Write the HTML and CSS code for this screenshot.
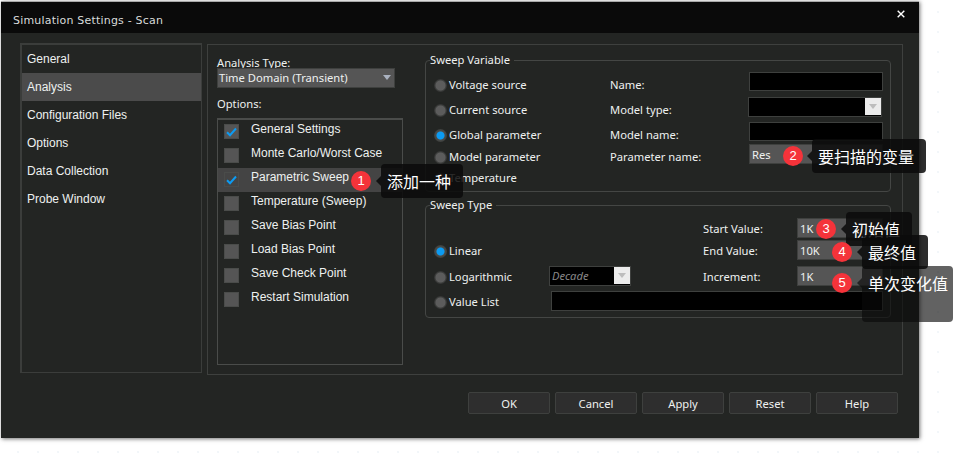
FILE: index.html
```html
<!DOCTYPE html>
<html lang="en">
<head>
<meta charset="utf-8">
<title>Simulation Settings - Scan</title>
<link rel="stylesheet" href="styles.css">
</head>
<body>
<div class="dialog">
  <header class="titlebar">
    <span class="title">Simulation Settings - Scan</span>
    <svg class="close" width="8" height="8" viewBox="0 0 8 8"><path d="M.7.7l6.6 6.6M7.3.7L.7 7.3" stroke="#fff" stroke-width="1.4"/></svg>
  </header>
  <div class="content">
    <nav class="sidebar">
      <div class="nav-item">General</div>
      <div class="nav-item active">Analysis</div>
      <div class="nav-item">Configuration Files</div>
      <div class="nav-item">Options</div>
      <div class="nav-item">Data Collection</div>
      <div class="nav-item">Probe Window</div>
    </nav>
    <main class="panel">
      <section class="options-col">
        <label class="type-label">Analysis Type:</label>
        <div class="type-select">Time Domain (Transient)<i class="caret"></i></div>
        <label class="options-label">Options:</label>
        <div class="checklist">
          <div class="check-row"><span class="box"><svg width="11" height="10" viewBox="0 0 11 10"><path d="M1 5.2l3 3L10 1.5" fill="none" stroke="#0c9bf2" stroke-width="2"/></svg></span>General Settings</div>
          <div class="check-row"><span class="box"></span>Monte Carlo/Worst Case</div>
          <div class="check-row selected"><span class="box"><svg width="11" height="10" viewBox="0 0 11 10"><path d="M1 5.2l3 3L10 1.5" fill="none" stroke="#0c9bf2" stroke-width="2"/></svg></span>Parametric Sweep</div>
          <div class="check-row"><span class="box"></span>Temperature (Sweep)</div>
          <div class="check-row"><span class="box"></span>Save Bias Point</div>
          <div class="check-row"><span class="box"></span>Load Bias Point</div>
          <div class="check-row"><span class="box"></span>Save Check Point</div>
          <div class="check-row"><span class="box"></span>Restart Simulation</div>
        </div>
      </section>
      <section class="sweep-col">
        <fieldset class="group variable">
          <legend>Sweep Variable</legend>
          <div class="var-grid">
            <div class="radio-label"><i class="radio"></i>Voltage source</div>
            <div class="lbl">Name:</div>
            <div class="field"></div>
            <div class="radio-label"><i class="radio"></i>Current source</div>
            <div class="lbl">Model type:</div>
            <div class="combo wide"><span class="combo-btn"><i class="caret grey"></i></span></div>
            <div class="radio-label"><i class="radio on"></i>Global parameter</div>
            <div class="lbl">Model name:</div>
            <div class="field"></div>
            <div class="radio-label"><i class="radio"></i>Model parameter</div>
            <div class="lbl">Parameter name:</div>
            <div class="value">Res</div>
            <div class="radio-label"><i class="radio"></i>Temperature</div>
          </div>
        </fieldset>
        <fieldset class="group type">
          <legend>Sweep Type</legend>
          <div class="type-grid">
            <div></div><div></div>
            <div class="lbl">Start Value:</div>
            <div class="value">1K</div>
            <div class="radio-label"><i class="radio on"></i>Linear</div><div></div>
            <div class="lbl">End Value:</div>
            <div class="value">10K</div>
            <div class="radio-label"><i class="radio"></i>Logarithmic</div>
            <div class="combo decade">Decade<span class="combo-btn"><i class="caret grey"></i></span></div>
            <div class="lbl">Increment:</div>
            <div class="value">1K</div>
            <div class="radio-label"><i class="radio"></i>Value List</div>
            <div class="field list"></div>
          </div>
        </fieldset>
      </section>
    </main>
  </div>
  <footer class="actions">
    <button class="btn">OK</button>
    <button class="btn">Cancel</button>
    <button class="btn">Apply</button>
    <button class="btn">Reset</button>
    <button class="btn">Help</button>
  </footer>
</div>

<div class="note n1"><span class="badge">1</span><span class="tip">添加一种</span></div>
<div class="note n2"><span class="badge">2</span><span class="tip">要扫描的变量</span></div>
<div class="note n3"><span class="badge">3</span><span class="tip">初始值</span></div>
<div class="note n4"><span class="badge">4</span><span class="tip">最终值</span></div>
<div class="note n5"><span class="badge">5</span><span class="tip">单次变化值</span></div>
</body>
</html>
```
FILE: styles.css
```css
* { box-sizing: border-box; }
html, body { height: 100%; }
body {
  margin: 0;
  padding: 1px 0 0 1px;
  overflow: hidden;
  background-color: #fff;
  background-image: radial-gradient(#e4ecf2 .6px, transparent .8px);
  background-size: 20px 20px;
  background-position: 8px 2px;
  font-family: "Liberation Sans", Arial, sans-serif;
  font-size: 12px;
  color: #eef1f0;
}
.dialog {
  width: 918px;
  height: 437px;
  display: flex;
  flex-direction: column;
  background: #232523;
  border-top: 1px solid #a8a8a8;
  box-shadow: 1px 1px 4px rgba(0,0,0,.55);
}
.titlebar {
  height: 31px;
  flex: none;
  display: flex;
  align-items: center;
  justify-content: space-between;
  padding: 6px 14px 0 12px;
  background: #0a0a0a;
}
.title {
  font-family: "DejaVu Sans", sans-serif;
  font-size: 11px;
  color: #d8dbda;
  letter-spacing: .2px;
}
.close { margin-top: -14px; }
.content {
  display: flex;
  gap: 5px;
  padding: 10px 16px 0 19px;
}
.sidebar {
  width: 182px;
  height: 330px;
  flex: none;
  border: 2px solid #3b3d3b;
  border-width: 2px 1px 1px 2px;
}
.nav-item {
  height: 28px;
  line-height: 28px;
  padding-left: 5px;
}
.nav-item.active { background: #4b4b4b; }
.panel {
  flex: 1;
  height: 331px;
  margin-top: 1px;
  border: 1px solid #3e403e;
  display: flex;
  padding: 0 11px 0 9px;
}
.options-col { width: 186px; flex: none; }
.type-label,
.options-label,
.type-select,
.group,
.btn {
  font-family: "Noto Sans", sans-serif;
  font-size: 11.2px;
}
.type-label { display: block; margin-top: 11px; height: 12px; line-height: 14px; }
.type-select {
  position: relative;
  height: 20px;
  width: 178px;
  line-height: 18px;
  padding-left: 1px;
  background: #555;
  border: 1px solid #3e403e;
}
.caret {
  display: inline-block;
  width: 0;
  height: 0;
  border: 4px solid transparent;
  border-top: 5px solid #aab2c0;
  border-bottom: 0;
}
.type-select .caret { position: absolute; right: 3px; top: 6px; }
.caret.grey { border-top-color: #bdbdbd; }
.options-label { display: block; margin-top: 8px; height: 16px; line-height: 16px; }
.checklist {
  width: 186px;
  height: 247px;
  margin-top: 6px;
  border: 1px solid #4a4c4a;
  border-top-width: 2px;
}
.check-row {
  height: 24px;
  display: flex;
  align-items: flex-start;
  padding-left: 6px;
  line-height: 18px;
}
.check-row.selected { background: #444; }
.box {
  width: 15px;
  height: 15px;
  margin: 4px 12px 0 0;
  background: #555;
  border: 1px solid #4a4c4a;
  display: flex;
  align-items: center;
  justify-content: center;
  flex: none;
}
.selected .box { background: #444; }
.sweep-col { margin-left: 22px; flex: 1; }
.group {
  margin: 0;
  padding: 0 7px 0 8px;
  border: 1px solid #444644;
  border-radius: 4px;
  min-width: 0;
  width: 466px;
}
.group legend { padding: 0 4px 0 0; margin-left: -4px; line-height: 16px; }
.variable { height: 140px; margin-top: 7px; }
.type { height: 121px; margin-top: 5px; }
.var-grid {
  display: grid;
  grid-template-columns: 176px 139px 134px;
  grid-template-rows: 25px 25px 22px 21px 21px;
  margin-top: 4px;
  align-items: start;
}
.var-grid .lbl, .var-grid .radio-label { margin-top: 3px; }
.type-grid {
  display: grid;
  grid-template-columns: 115px 154px 94px 86px;
  grid-template-rows: 22px 26px 25px 20px;
  margin-top: 5px;
  align-items: start;
}
.type-grid .lbl, .type-grid .radio-label { margin-top: 1px; }
.lbl, .radio-label { line-height: 20px; white-space: nowrap; }
.radio-label { display: flex; align-items: center; }
.radio {
  width: 13px;
  height: 13px;
  margin-right: 2px;
  border-radius: 50%;
  background: radial-gradient(circle, #5c5c5c 0 4.5px, #3c3e3c 5.5px, #333 6.5px);
  flex: none;
}
.radio.on { background: radial-gradient(circle, #0c9bf2 0 3.5px, #4a4c4a 4.5px, #3c3e3c 6.5px); }
.field { height: 19px; background: #000; border: 1px solid #3e403e; }
.field.list { grid-column: 2 / 5; margin-left: 2px; height: 20px; }
.value {
  height: 20px;
  line-height: 19px;
  padding-left: 2px;
  background: #555;
  border: 1px solid #3e403e;
}
.combo {
  position: relative;
  height: 20px;
  background: #000;
  border: 1px solid #3e403e;
}
.combo.wide { margin-left: -1px; margin-right: 1px; }
.combo-btn {
  position: absolute;
  right: 0;
  top: 0;
  width: 16px;
  height: 17px;
  background: #ececec;
  display: flex;
  align-items: center;
  justify-content: center;
}
.decade { width: 82px; padding-left: 2px; font-style: italic; color: #888; line-height: 17px; }
.actions {
  display: flex;
  justify-content: flex-end;
  gap: 5px;
  padding: 17px 21px 0 0;
}
.btn {
  width: 82px;
  height: 22px;
  padding: 0;
  background: #2e2e2e;
  border: 1px solid #3e403e;
  border-radius: 2px;
  color: #eef1f0;
}
.note { position: absolute; display: flex; align-items: center; }
.badge {
  width: 20px;
  height: 20px;
  border-radius: 50%;
  background: #f5333a;
  color: #fff;
  text-align: center;
  line-height: 20px;
  font-family: "Liberation Sans", sans-serif;
  font-size: 13px;
  flex: none;
}
.tip {
  position: relative;
  height: 34px;
  padding: 0 12px 0 6px;
  margin-left: 10px;
  border-radius: 4px;
  background: rgba(10,10,10,.86);
  color: #fff;
  line-height: 34px;
  font-family: "Noto Sans CJK SC", sans-serif;
  font-size: 16px;
  white-space: nowrap;
}
.tip::before {
  content: "";
  position: absolute;
  left: -5px;
  top: 12px;
  border: 5px solid transparent;
  border-left: 0;
  border-right-color: rgba(10,10,10,.86);
}
.n1 { left: 351px; top: 164px; }
.n2 { left: 783px; top: 139px; }
.n2 .tip { margin-left: 9px; }
.n3 { left: 816px; top: 212px; }
.n4 { left: 832px; top: 235px; }
.n5 { left: 832px; top: 266px; align-items: flex-start; }
.n5 .badge { margin-top: 7px; }
.n5 .tip { height: 56px; padding-right: 5px; background: rgba(10,10,10,.64); }
.n5 .tip::before { border-right-color: rgba(10,10,10,.64); }
```
